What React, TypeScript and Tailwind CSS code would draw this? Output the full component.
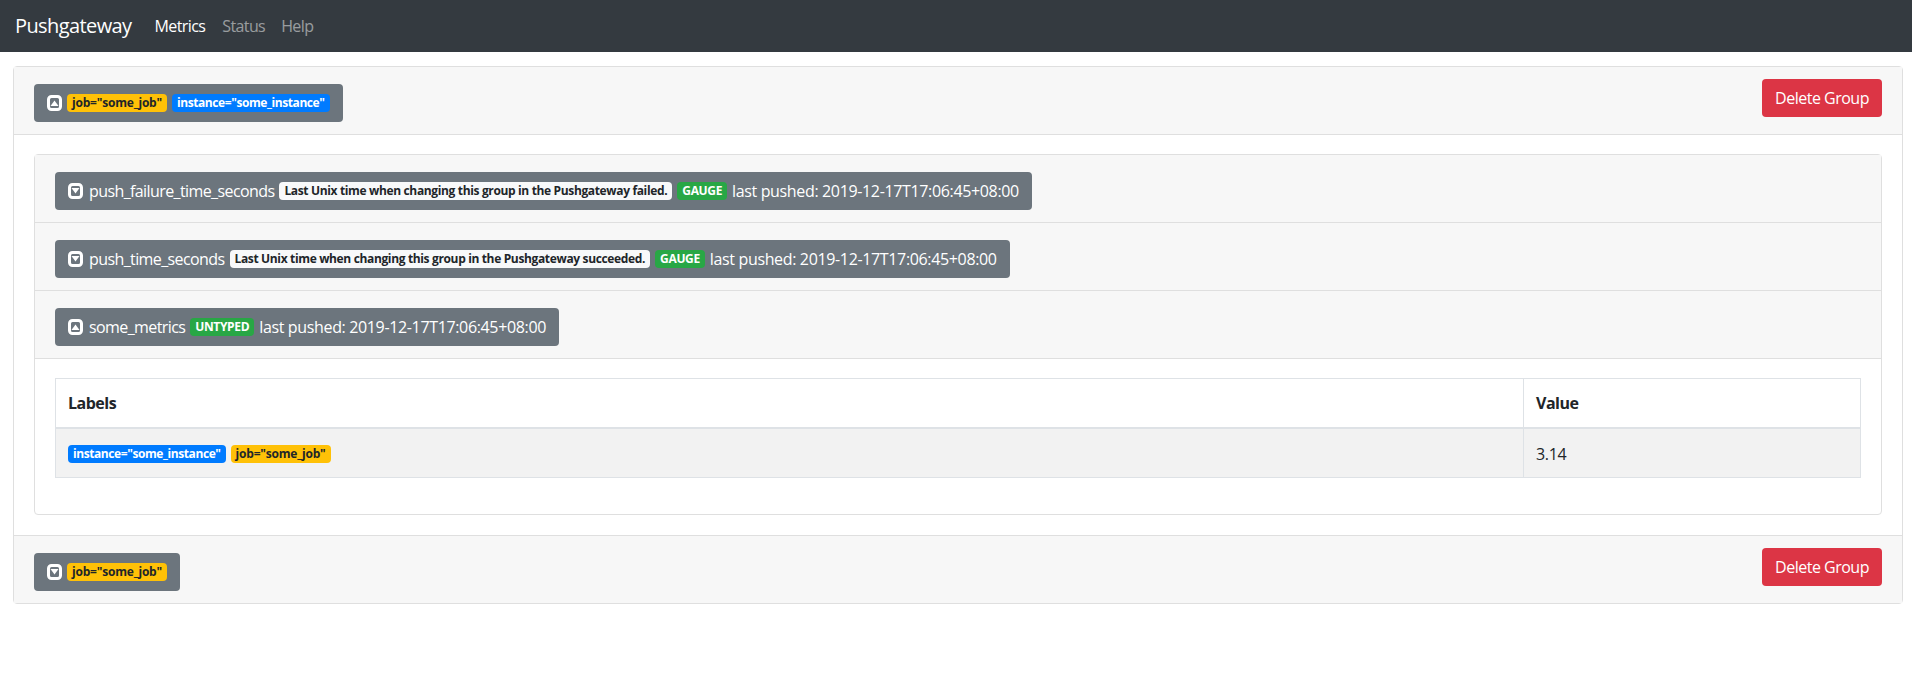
const font = { fontFamily: '"Open Sans", sans-serif' };

function Caret({ up }: { up?: boolean }) {
  return (
    <svg width="15" height="16" viewBox="0 0 15 16" className="shrink-0">
      <rect x="1.5" y="1.5" width="12" height="13" rx="3" fill="none" stroke="#fff" strokeWidth="3" />
      <path d={up ? 'M3.5 11 7.5 5.5l4 5.5z' : 'M3.5 5h8l-4 5.5z'} fill="#fff" />
    </svg>
  );
}

function Badge({ color, children }: { color: string; children: React.ReactNode }) {
  return (
    <span className={`inline-block rounded px-[5px] py-[3px] text-[12px] font-bold leading-3 ${color}`}>
      {children}
    </span>
  );
}

const yellow = 'bg-[#ffc107] text-[#212529] tracking-[-0.2px]';
const blue = 'bg-[#007bff] text-white tracking-[-0.42px]';
const green = 'bg-[#28a745] text-white tracking-[-0.35px]';
const light = 'bg-[#f8f9fa] text-[#212529] tracking-[-0.35px]';

function Toggle({ children }: { children: React.ReactNode }) {
  return (
    <div className="inline-flex h-[38px] items-center gap-[5px] rounded bg-[#6c757d] px-[13px] text-white whitespace-nowrap">
      {children}
    </div>
  );
}

function DeleteButton() {
  return <button className="h-[38px] w-[120px] rounded bg-[#dc3545] tracking-[-0.5px] text-white">Delete Group</button>;
}

function MetricRow({ name, help, type, up }: { name: string; help?: string; type: string; up?: boolean }) {
  return (
    <div className="h-[68px] border-b border-[#dfdfdf] bg-[#f7f7f7] pt-[17px] pl-5">
      <Toggle>
        <Caret up={up} />
        <span className="ml-px tracking-[-0.6px]">{name}</span>
        {help && <Badge color={light}>{help}</Badge>}
        <Badge color={green}>{type}</Badge>
        <span className="tracking-[-0.35px]">last pushed: 2019-12-17T17:06:45+08:00</span>
      </Toggle>
    </div>
  );
}

export default function App() {
  return (
    <div style={font} className="text-[16px] leading-6 text-[#212529]">
      <nav className="flex h-[52px] items-center bg-[#343a40] pl-[15px] tracking-[-0.6px]">
        <span className="mr-[23px] text-[20px] text-white">Pushgateway</span>
        <span className="mr-[17px] text-white">Metrics</span>
        <span className="mr-4 text-white/50">Status</span>
        <span className="text-white/50">Help</span>
      </nav>
      <div className="mx-[13px] mt-[14px] w-[1890px] rounded border border-[#dfdfdf]">
        <div className="flex h-[68px] justify-between border-b border-[#dfdfdf] bg-[#f7f7f7] pt-3 pr-5 pl-5">
          <div className="pt-[5px]">
            <Toggle>
              <Caret up />
              <Badge color={yellow}>job="some_job"</Badge>
              <Badge color={blue}>instance="some_instance"</Badge>
            </Toggle>
          </div>
          <DeleteButton />
        </div>
        <div className="px-5 pt-[19px] pb-5">
          <div className="rounded border border-[#dfdfdf]">
            <MetricRow name="push_failure_time_seconds" help="Last Unix time when changing this group in the Pushgateway failed." type="GAUGE" />
            <MetricRow name="push_time_seconds" help="Last Unix time when changing this group in the Pushgateway succeeded." type="GAUGE" />
            <MetricRow name="some_metrics" type="UNTYPED" up />
            <div className="px-5 pt-[19px] pb-5">
              <table className="mb-4 w-full border-separate border-spacing-0 border-t border-l border-[#dee2e6]">
                <thead>
                  <tr>
                    <th className="h-[50px] border-r border-b-2 border-[#dee2e6] px-3 text-left font-bold tracking-[-0.5px]">Labels</th>
                    <th className="w-[337px] border-r border-b-2 border-[#dee2e6] px-3 text-left font-bold tracking-[-0.5px]">Value</th>
                  </tr>
                </thead>
                <tbody>
                  <tr className="bg-[#f2f2f2]">
                    <td className="h-[49px] border-r border-b border-[#dee2e6] px-3 pt-[2px]">
                      <span className="flex items-center gap-[5px]">
                        <Badge color={blue}>instance="some_instance"</Badge>
                        <Badge color={yellow}>job="some_job"</Badge>
                      </span>
                    </td>
                    <td className="border-r border-b border-[#dee2e6] px-3 pt-[2px] tracking-[-0.35px]">3.14</td>
                  </tr>
                </tbody>
              </table>
            </div>
          </div>
        </div>
        <div className="flex h-[68px] justify-between border-t border-[#dfdfdf] bg-[#f7f7f7] pt-3 pr-5 pl-5">
          <div className="pt-[5px]">
            <Toggle>
              <Caret />
              <Badge color={yellow}>job="some_job"</Badge>
            </Toggle>
          </div>
          <DeleteButton />
        </div>
      </div>
    </div>
  );
}
